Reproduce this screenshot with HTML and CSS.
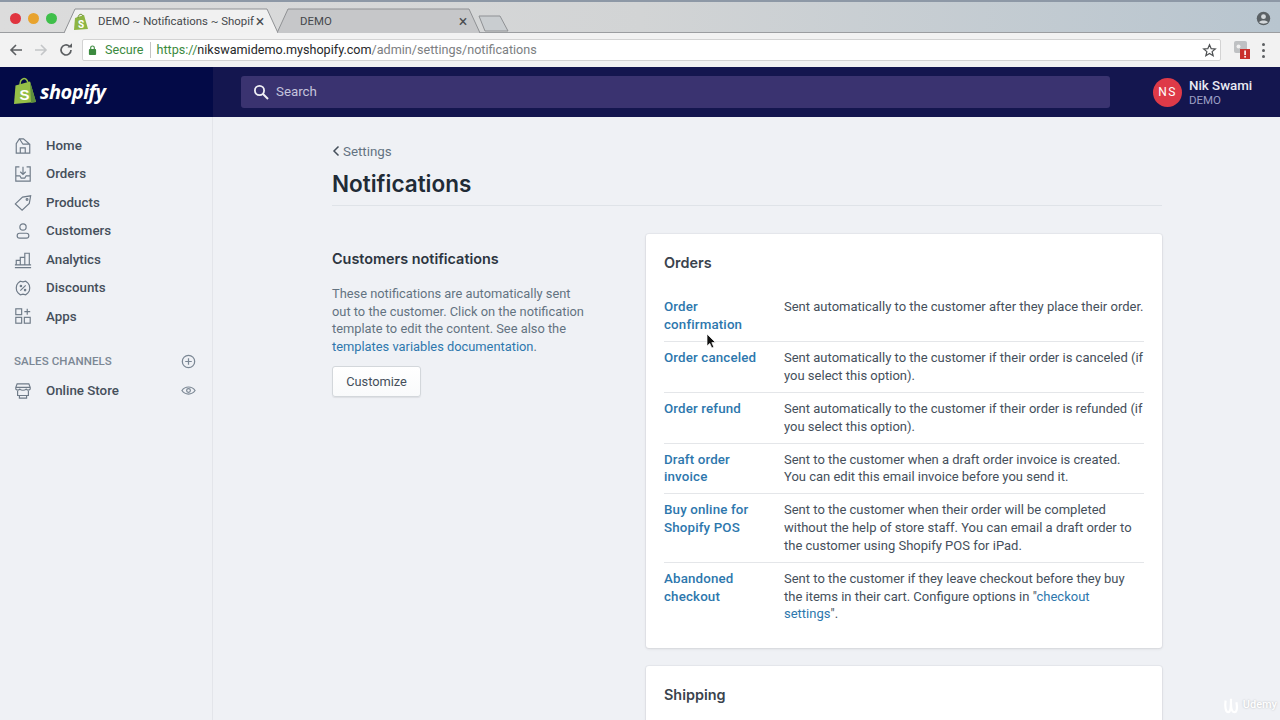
FILE: index.html
```html
<!DOCTYPE html>
<html lang="en">
<head>
  <meta charset="UTF-8" />
  <title>DEMO ~ Notifications ~ Shopify</title>
  <link rel="stylesheet" href="styles.css">
</head>
<body>

  <!-- Browser chrome -->
  <div class="tabstrip">
    <div class="lights">
      <span class="light red"></span>
      <span class="light yellow"></span>
      <span class="light green"></span>
    </div>
    <div class="tab tab-active">
      <svg class="tab-shape" viewBox="0 0 214 25" preserveAspectRatio="none"><path d="M0 25 L11 1 H203 L214 25" fill="#f1f1f1" stroke="#8f9194"/></svg>
      <svg class="favicon" viewBox="0 0 16 18"><path d="M2 5 L11 2 L15 16 L1 17 Z" fill="#8db543"/><path d="M5 5 C5 1 9 0 10 3" fill="none" stroke="#6f9433"/><text x="5" y="15" class="favicon-s">S</text></svg>
      <span class="tab-title">DEMO ~ Notifications ~ Shopif</span>
      <span class="tab-close">×</span>
    </div>
    <div class="tab tab-idle">
      <svg class="tab-shape" viewBox="0 0 203 25" preserveAspectRatio="none"><path d="M0 25 L0 25 L11 1 H192 L203 25" fill="#c6c7c9" stroke="#8f9194"/></svg>
      <span class="tab-title tab-title-idle">DEMO</span>
      <span class="tab-close">×</span>
    </div>
    <svg class="new-tab" viewBox="0 0 31 17"><path d="M1 1 H22 L30 16 H7 Z" fill="#c9cdd0" stroke="#8f9194"/></svg>
    <svg class="profile" viewBox="0 0 16 16"><circle cx="8" cy="8" r="7.2" fill="#5b6165"/><circle cx="8" cy="6" r="2.6" fill="#d4d8db"/><path d="M3.2 12 C4.5 9.4 11.5 9.4 12.8 12 C11 14 5 14 3.2 12Z" fill="#d4d8db"/></svg>
  </div>

  <div class="toolbar">
    <svg class="tool-icon" viewBox="0 0 16 16"><path d="M14 8 H3 M8 3 L3 8 L8 13" fill="none" stroke="#5c5f62" stroke-width="1.6"/></svg>
    <svg class="tool-icon" viewBox="0 0 16 16"><path d="M2 8 H13 M8 3 L13 8 L8 13" fill="none" stroke="#c4c6c8" stroke-width="1.6"/></svg>
    <svg class="tool-icon" viewBox="0 0 16 16"><path d="M13 8 A5 5 0 1 1 11.4 4.3" fill="none" stroke="#5c5f62" stroke-width="1.7"/><path d="M9.5 5.6 H14 V1.2 Z" fill="#5c5f62"/></svg>
    <div class="omnibox">
      <svg class="lock" viewBox="0 0 10 12"><rect x="1" y="5" width="8" height="6.5" rx="1" fill="#3b8a3e"/><path d="M3 5 V3.4 C3 .9 7 .9 7 3.4 V5" fill="none" stroke="#3b8a3e" stroke-width="1.2"/></svg>
      <span class="secure">Secure</span>
      <span class="omni-sep"></span>
      <span class="url"><span class="url-https">https://</span><span class="url-host">nikswamidemo.myshopify.com</span>/admin/settings/notifications</span>
      <svg class="star" viewBox="0 0 16 16"><path d="M8 1.8 L9.8 6 L14.2 6.3 L10.8 9.2 L11.9 13.6 L8 11.2 L4.1 13.6 L5.2 9.2 L1.8 6.3 L6.2 6 Z" fill="none" stroke="#4d5052" stroke-width="1.3"/></svg>
    </div>
    <div class="ext">
      <svg class="ext-icon" viewBox="0 0 20 20"><rect x="2" y="1" width="13" height="12" rx="2" fill="#bfc1c3"/><circle cx="6.5" cy="6.5" r="2" fill="#f1f1f1"/><rect x="8" y="9" width="10" height="10" fill="#c9302c"/><rect x="12.3" y="10.5" width="1.6" height="4.6" fill="#fff"/><rect x="12.3" y="16" width="1.6" height="1.6" fill="#fff"/></svg>
    </div>
    <div class="dots"><span></span><span></span><span></span></div>
  </div>

  <!-- Shopify top bar -->
  <header class="topbar">
    <div class="brand">
      <svg class="brand-bag" viewBox="0 0 24 28"><path d="M2.5 8.5 L17 4.5 L23 25 L1 27 Z" fill="#95bf47"/><path d="M17 4.5 L23 25 L18 26 Z" fill="#5e8e3e"/><path d="M7 8 C7 1 13 -1 15 5.5" fill="none" stroke="#95bf47" stroke-width="1.5"/><text x="6.5" y="23" class="bag-s">S</text></svg>
      <span class="brand-name">shopify</span>
    </div>
    <div class="topbar-main">
      <div class="search">
        <svg class="search-icon" viewBox="0 0 16 16"><circle cx="6.5" cy="6.5" r="4.6" fill="none" stroke="#f1f1f6" stroke-width="1.8"/><path d="M10 10 L15 15" stroke="#f1f1f6" stroke-width="2"/></svg>
        <span>Search</span>
      </div>
      <div class="user">
        <span class="avatar">NS</span>
        <div class="user-text">
          <div class="user-name">Nik Swami</div>
          <div class="user-store">DEMO</div>
        </div>
      </div>
    </div>
  </header>

  <div class="frame">
    <!-- Sidebar -->
    <nav class="sidebar">
      <a class="nav-item">
        <svg class="nav-icon" viewBox="0 0 20 20"><path d="M2.5 18 V7.5 L6 2 H10.5 L17.5 8 V18 Z M2.5 7.5 L6 2 M6 2 L10 8 H17.5 M7 18 V12 H12.5 V18" /></svg>
        Home
      </a>
      <a class="nav-item">
        <svg class="nav-icon" viewBox="0 0 20 20"><path d="M6 2 H2 V18 H18 V2 H14 M2 12 H6.5 L8 14.5 H12 L13.5 12 H18 M10 2 V10 M7 7.5 L10 10.5 L13 7.5" /></svg>
        Orders
      </a>
      <a class="nav-item">
        <svg class="nav-icon" viewBox="0 0 20 20"><path d="M1.5 11 L9.5 3.5 L18.5 2 L17 10.5 L9 18 Z" /><circle cx="14.5" cy="6" r="1"/></svg>
        Products
      </a>
      <a class="nav-item">
        <svg class="nav-icon" viewBox="0 0 20 20"><circle cx="10" cy="5.5" r="3.5"/><rect x="3.5" y="12.5" width="13" height="5.5" rx="2.7"/></svg>
        Customers
      </a>
      <a class="nav-item">
        <svg class="nav-icon" viewBox="0 0 20 20"><path d="M1 18.5 H19 M1 15.5 H19 M2.5 15.5 V10.5 H7 V15.5 M7 15.5 V7 H12 V15.5 M12 15.5 V2.5 H17 V15.5" /></svg>
        Analytics
      </a>
      <a class="nav-item">
        <svg class="nav-icon" viewBox="0 0 20 20"><path d="M7 2.5 L10 3.2 L13 2.5 L15.5 4.5 L17 7 L17.5 10 L17 13 L15.5 15.5 L13 17.5 L10 16.8 L7 17.5 L4.5 15.5 L3 13 L2.5 10 L3 7 L4.5 4.5 Z M7 13 L13 7"/><circle cx="7.7" cy="7.7" r=".8"/><circle cx="12.3" cy="12.3" r=".8"/></svg>
        Discounts
      </a>
      <a class="nav-item">
        <svg class="nav-icon" viewBox="0 0 20 20"><rect x="2" y="2" width="6.5" height="6.5"/><rect x="2" y="11.5" width="6.5" height="6.5"/><rect x="11.5" y="11.5" width="6.5" height="6.5"/><path d="M14.7 2 V8.5 M11.5 5.2 H18"/></svg>
        Apps
      </a>

      <div class="nav-heading">
        <span>SALES CHANNELS</span>
        <svg class="nav-side-icon" viewBox="0 0 16 16"><circle cx="8" cy="8" r="6.6"/><path d="M8 4.5 V11.5 M4.5 8 H11.5"/></svg>
      </div>
      <a class="nav-item nav-item-channel">
        <svg class="nav-icon" viewBox="0 0 20 20"><path d="M3.5 2 H16.5 L18 6 V8 C16.5 9.5 15 9.5 13.5 8 C12 9.5 8 9.5 6.5 8 C5 9.5 3.5 9.5 2 8 V6 Z M2 6 H18 M4 10 V15 H16 V10 M6 15 V18 H14 V15"/></svg>
        Online Store
        <svg class="nav-side-icon nav-eye" viewBox="0 0 16 16"><path d="M1 8 C4.5 3 11.5 3 15 8 C11.5 13 4.5 13 1 8 Z"/><circle cx="8" cy="8" r="2"/></svg>
      </a>
    </nav>

    <!-- Main content -->
    <main class="main">
      <div class="page">
        <a class="breadcrumb">
          <svg class="crumb-arrow" viewBox="0 0 8 12"><path d="M6.5 1.5 L2 6 L6.5 10.5" /></svg>
          Settings
        </a>
        <h1 class="page-title">Notifications</h1>

        <div class="layout">
          <section class="intro">
            <h2 class="intro-title">Customers notifications</h2>
            <p class="intro-text">These notifications are automatically sent out to the customer. Click on the notification template to edit the content. See also the <a class="link">templates variables documentation</a>.</p>
            <button class="btn">Customize</button>
          </section>

          <div class="cards">
            <section class="card">
              <h3 class="card-title">Orders</h3>
              <div class="row">
                <a class="row-name">Order confirmation</a>
                <div class="row-desc">Sent automatically to the customer after they place their order.</div>
              </div>
              <div class="row">
                <a class="row-name">Order canceled</a>
                <div class="row-desc">Sent automatically to the customer if their order is canceled (if you select this option).</div>
              </div>
              <div class="row">
                <a class="row-name">Order refund</a>
                <div class="row-desc">Sent automatically to the customer if their order is refunded (if you select this option).</div>
              </div>
              <div class="row">
                <a class="row-name">Draft order invoice</a>
                <div class="row-desc">Sent to the customer when a draft order invoice is created. You can edit this email invoice before you send it.</div>
              </div>
              <div class="row">
                <a class="row-name">Buy online for Shopify POS</a>
                <div class="row-desc">Sent to the customer when their order will be completed without the help of store staff. You can email a draft order to the customer using Shopify POS for iPad.</div>
              </div>
              <div class="row">
                <a class="row-name">Abandoned checkout</a>
                <div class="row-desc">Sent to the customer if they leave checkout before they buy the items in their cart. Configure options in "<a class="link">checkout settings</a>".</div>
              </div>
            </section>

            <section class="card">
              <h3 class="card-title">Shipping</h3>
            </section>
          </div>
        </div>
      </div>
    </main>
  </div>

  <!-- Mouse pointer and video watermark sit over the page -->
  <svg class="pointer" viewBox="0 0 10 16"><path d="M1 1 V13 L3.8 10.4 L5.8 15 L7.8 14 L5.8 9.6 L9.4 9.4 Z" fill="#111" stroke="#fff" stroke-width=".7"/></svg>
  <div class="watermark">
    <svg class="watermark-mark" viewBox="0 0 18 20"><path d="M3 5 C2 12 3 18 6 18 C9 18 9 10 9 3 M9 8 C9 14 10 18 13 18 C16 18 16 12 15 7" fill="none" stroke="#fff" stroke-width="2.4"/></svg>
    <span>Udemy</span>
  </div>

</body>
</html>
```

FILE: styles.css
```css
html, body {
  margin: 0;
  height: 720px;
  overflow: hidden;
}

body {
  position: relative;
  font-family: Roboto, "Noto Sans", sans-serif;
  font-size: 12.85px;
  line-height: 17.78px;
  color: #454f5b;
  background-color: #eff1f5;
}

/* Browser chrome */
.tabstrip {
  display: flex;
  align-items: flex-end;
  height: 33px;
  box-sizing: border-box;
  padding-left: 10px;
  background: linear-gradient(90deg, #dcdcdc 0%, #d2d4d5 50%, #b8c5cf 100%);
  border-top: 2px solid #8d98a6;
  border-bottom: 1px solid #9b9da0;
}

.lights {
  display: flex;
  gap: 7px;
  width: 54px;
  align-self: center;
  margin-top: 3px;
  flex-shrink: 0;
}

.light {
  width: 11px;
  height: 11px;
  border-radius: 50%;
}

.light.red { background-color: #e0343f; }
.light.yellow { background-color: #e8a32e; }
.light.green { background-color: #3fbf4a; }

.tab {
  position: relative;
  display: flex;
  align-items: center;
  height: 25px;
  box-sizing: border-box;
  padding-top: 2px;
  margin-bottom: -1px;
  font-size: 11.4px;
  color: #45484b;
}

.tab-active {
  width: 214px;
  padding-left: 9px;
  z-index: 1;
}

.tab-idle {
  width: 203px;
  margin-left: -1px;
}

.tab-shape {
  position: absolute;
  top: 0;
  left: 0;
  width: 100%;
  height: 100%;
}

.favicon {
  position: relative;
  width: 16px;
  height: 18px;
  margin-right: 9px;
  flex-shrink: 0;
}

.favicon-s {
  font-size: 10px;
  font-weight: bold;
  fill: #fff;
}

.tab-title {
  position: relative;
  width: 156px;
  white-space: nowrap;
}

.tab-title-idle {
  width: 180px;
  padding-left: 23px;
  box-sizing: border-box;
}

.tab-close {
  position: relative;
  font-size: 16px;
  width: 12px;
  text-align: center;
  color: #4a4d50;
}

.new-tab {
  width: 31px;
  height: 17px;
  margin-left: -2px;
}

.profile {
  width: 15px;
  height: 15px;
  margin-left: auto;
  margin-right: 9px;
  margin-top: 2px;
  align-self: center;
}

.toolbar {
  display: flex;
  align-items: center;
  height: 34px;
  box-sizing: border-box;
  padding-left: 8px;
  background-color: #f2f2f2;
}

.tool-icon {
  width: 16px;
  height: 16px;
  margin-right: 9px;
  flex-shrink: 0;
}

.omnibox {
  display: flex;
  align-items: center;
  width: 1139px;
  height: 22px;
  box-sizing: border-box;
  margin-left: -1px;
  padding: 0 3px 0 5px;
  background-color: #fff;
  border: 1px solid #d3d3d3;
  border-radius: 2px;
  font-size: 12.6px;
  color: #7b7e81;
}

.lock {
  width: 9px;
  height: 12px;
  margin-right: 8px;
}

.secure {
  color: #3b8a3e;
}

.omni-sep {
  width: 1px;
  height: 16px;
  margin: 0 6px;
  background-color: #c4c4c4;
}

.url-https {
  color: #3b8a3e;
}

.url-host {
  color: #26282a;
}

.star {
  width: 15px;
  height: 15px;
  margin-left: auto;
}

.ext {
  margin-left: 11px;
  line-height: 0;
}

.ext-icon {
  width: 20px;
  height: 20px;
}

.dots {
  display: flex;
  flex-direction: column;
  gap: 3px;
  margin-left: 10px;
}

.dots span {
  width: 3px;
  height: 3px;
  border-radius: 50%;
  background-color: #5c5f62;
}

/* Shopify top bar */
.topbar {
  display: flex;
  height: 50px;
  background-color: #14164f;
  color: #fff;
}

.brand {
  display: flex;
  align-items: center;
  width: 213px;
  box-sizing: border-box;
  padding-left: 13px;
  background-color: #030a47;
  flex-shrink: 0;
}

.brand-bag {
  width: 24px;
  height: 28px;
  margin-right: 3px;
  margin-top: -3px;
}

.bag-s {
  font-family: "Liberation Sans", sans-serif;
  font-size: 15px;
  font-weight: bold;
  fill: #fff;
}

.brand-name {
  font-family: "Open Sans", sans-serif;
  font-size: 20px;
  font-weight: 700;
  font-style: italic;
  letter-spacing: -.5px;
}

.topbar-main {
  display: flex;
  align-items: center;
  flex: 1;
  padding-left: 28px;
}

.search {
  display: flex;
  align-items: center;
  width: 869px;
  height: 32px;
  box-sizing: border-box;
  padding-left: 12px;
  background-color: #3a3370;
  border-radius: 3px;
  font-size: 13.33px;
  color: #c5c4dc;
}

.search-icon {
  width: 16px;
  height: 16px;
  margin-right: 7px;
}

.user {
  display: flex;
  align-items: center;
  height: 100%;
  margin-left: 43px;
}

.avatar {
  width: 29px;
  height: 29px;
  border-radius: 50%;
  margin-right: 7px;
  background-color: #de3a48;
  font-size: 12px;
  line-height: 29px;
  letter-spacing: 1.5px;
  text-align: center;
}

.user-name {
  font-size: 13.33px;
  font-weight: 500;
  line-height: 15px;
  color: #e9e9f2;
}

.user-store {
  font-size: 11.5px;
  line-height: 14px;
  color: #9d9fc4;
}

/* Sidebar */
.frame {
  display: flex;
  height: 603px;
}

.sidebar {
  width: 213px;
  box-sizing: border-box;
  padding: 14.6px 0 0;
  border-right: 1px solid #e3e5ea;
  flex-shrink: 0;
}

.nav-item {
  display: flex;
  align-items: center;
  height: 28.44px;
  padding: 0 16px 0 14px;
  font-size: 13.33px;
  font-weight: 500;
  color: #454f5b;
}

.nav-item-channel {
  margin-top: 4px;
}

.nav-icon {
  width: 18px;
  height: 18px;
  margin-right: 14px;
  fill: none;
  stroke: #6f7b88;
  stroke-width: 1.3;
  flex-shrink: 0;
}

.nav-heading {
  display: flex;
  justify-content: space-between;
  align-items: center;
  margin-top: 20px;
  height: 22px;
  padding: 0 16px 0 14px;
  font-size: 11.5px;
  font-weight: 500;
  letter-spacing: .1px;
  color: #7b8794;
}

.nav-side-icon {
  width: 15px;
  height: 15px;
  fill: none;
  stroke: #7b8794;
  stroke-width: 1.3;
}

.nav-eye {
  margin-left: auto;
}

/* Main content */
.main {
  flex: 1;
  overflow: hidden;
}

.page {
  width: 830px;
  margin-left: 119px;
  padding-top: 26px;
}

.breadcrumb {
  display: flex;
  align-items: center;
  font-size: 13.33px;
  color: #637381;
}

.crumb-arrow {
  width: 8px;
  height: 12px;
  margin-right: 3px;
  margin-top: -2px;
  fill: none;
  stroke: #454f5b;
  stroke-width: 1.5;
}

.page-title {
  margin: 0;
  padding: 7px 0 5px;
  font-family: Inter, sans-serif;
  font-size: 22.5px;
  font-weight: 600;
  line-height: 32px;
  color: #212b36;
  border-bottom: 1px solid #dfe3e8;
}

.layout {
  display: flex;
  justify-content: space-between;
  margin-top: 28px;
}

.intro {
  width: 256px;
  padding-top: 16px;
}

.intro-title {
  margin: 0;
  font-family: Inter, sans-serif;
  font-size: 14.4px;
  font-weight: 600;
  line-height: 18px;
  color: #2c3540;
}

.intro-text {
  margin: 17px 0 10px;
  color: #637381;
}

.link {
  color: #2d77ad;
}

.btn {
  display: block;
  width: 89px;
  height: 31px;
  padding: 0;
  font-family: inherit;
  font-size: 12.8px;
  color: #454f5b;
  background: linear-gradient(#fff, #f9fafb);
  border: 1px solid #d3d7db;
  border-radius: 3px;
  box-shadow: 0 1px 1px rgba(22, 29, 37, .08);
}

.cards {
  display: flex;
  flex-direction: column;
  gap: 17.5px;
  width: 516px;
}

.card {
  padding: 18px;
  background-color: #fff;
  border-radius: 3px;
  box-shadow: 0 0 0 1px rgba(63, 63, 68, .04), 0 1px 3px rgba(63, 63, 68, .12);
}

.card-title {
  margin: 0 0 18.5px;
  font-family: Inter, sans-serif;
  font-size: 14.4px;
  font-weight: 600;
  line-height: 21px;
  color: #3a434d;
}

.row {
  display: grid;
  grid-template-columns: 120px 1fr;
  padding: 7.1px 0;
  border-bottom: 1px solid #e4e6e9;
}

.row:last-child {
  border-bottom: none;
}

.row-name {
  padding-right: 20px;
  font-size: 13.33px;
  font-weight: 500;
  letter-spacing: .15px;
  color: #2d77ad;
}

.row-desc {
  font-size: 13px;
}

/* Overlays */
.pointer {
  position: absolute;
  left: 706px;
  top: 333px;
  width: 10px;
  height: 16px;
}

.watermark {
  position: absolute;
  right: 3px;
  bottom: 6px;
  display: flex;
  align-items: center;
  gap: 3px;
  font-size: 11px;
  font-weight: 500;
  color: #fff;
  text-shadow: 0 0 2px rgba(0, 0, 0, .25);
}

.watermark-mark {
  width: 18px;
  height: 18px;
}
```
